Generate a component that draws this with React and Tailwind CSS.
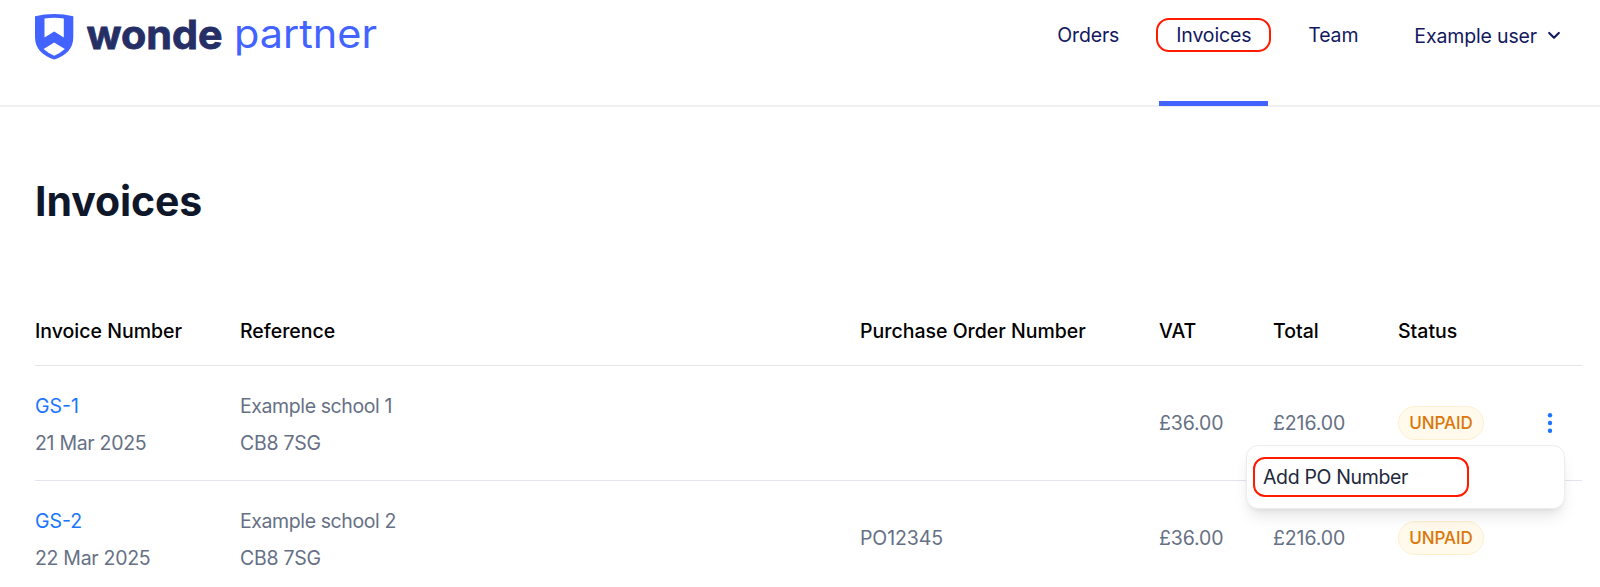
import { useState } from "react";

const invoices = [
  {
    id: "GS-1",
    date: "21 Mar 2025",
    school: "Example school 1",
    postcode: "CB8 7SG",
    po: "",
    vat: "£36.00",
    total: "£216.00",
    status: "UNPAID",
  },
  {
    id: "GS-2",
    date: "22 Mar 2025",
    school: "Example school 2",
    postcode: "CB8 7SG",
    po: "PO12345",
    vat: "£36.00",
    total: "£216.00",
    status: "UNPAID",
  },
];

function Logo() {
  return (
    <svg className="h-[72px] w-[360px]" viewBox="0 -12 360 72">
      {/* Shield */}
      <path
        fill="#4263ff"
        d="M0 4.2Q19 -0.2 38.3 4.2V25C38.3 37 31 43.5 19.2 47.6C7.5 43.5 0 37 0 25Z"
      />
      <path fill="#fff" d="M9.5 6.4Q19.2 5 28.8 6.4V25.4L19.2 19.6L9.5 25.4Z" />
      <path fill="#fff" d="M8.6 37L19.2 30.4L29.8 37Q25 41.4 19.2 43.8Q13.4 41.4 8.6 37Z" />
      <text
        x="51.5"
        y="36.5"
        textLength="136"
        lengthAdjust="spacingAndGlyphs"
        className="fill-[#252f66] stroke-[#252f66] font-['Inter',sans-serif] text-[40px] font-bold tracking-normal"
        strokeWidth="0.8"
      >
        wonde
      </text>
      <text
        x="199"
        y="36"
        textLength="143"
        lengthAdjust="spacingAndGlyphs"
        className="fill-[#4263ff] font-['Inter',sans-serif] text-[39px] font-normal tracking-normal"
      >
        partner
      </text>
    </svg>
  );
}

function Header() {
  return (
    <header className="flex h-[107px] items-stretch justify-between border-b-2 border-[#efeff0] pr-10 pl-[35px] tracking-[-0.15px] text-[#13185f]">
      <Logo />
      <nav className="flex">
        <a className="mt-5 mr-[37px] leading-[30px]">Orders</a>
        <div className="-mb-px flex w-[115px] flex-col items-center justify-between pt-[18px]">
          <a className="flex h-[34px] w-full items-center justify-center rounded-[13px] border-2 border-[#ff1a00] pt-0.5">
            Invoices
          </a>
          <span className="h-[5px] w-[109px] bg-[#4263ff]" />
        </div>
        <a className="mt-5 ml-[37px] leading-[30px]">Team</a>
        <button className="mt-[22px] ml-14 flex h-[30px] items-center gap-[11px]">
          Example user
          <svg className="-mt-1 h-3 w-3" viewBox="0 0 12 12" fill="none">
            <path
              d="M1.2 3.9L6 8.7L10.8 3.9"
              stroke="currentColor"
              strokeWidth="2.1"
              strokeLinecap="round"
              strokeLinejoin="round"
            />
          </svg>
        </button>
      </nav>
    </header>
  );
}

function ActionsMenu() {
  return (
    <div className="absolute top-[79px] right-[17px] z-10 h-16 w-[319px] rounded-xl border border-[#ececee] bg-white px-1.5 py-[11px] shadow-lg">
      <button className="flex h-10 w-[216px] items-center rounded-xl border-2 border-[#ff1a00] pt-0.5 pl-2 tracking-[-0.35px] text-[#1e293b]">
        Add PO Number
      </button>
    </div>
  );
}

function InvoiceRow({ invoice, open, onToggle }) {
  return (
    <div className="relative grid h-[115px] grid-cols-[205px_620px_299px_114px_125px_1fr] items-center border-b border-[#e4e5ee] text-[#667085]">
      <div className="pt-1 leading-[37px]">
        <a className="block tracking-normal text-[#1a75ff]">{invoice.id}</a>
        <p className="tracking-[-0.3px]">{invoice.date}</p>
      </div>
      <div className="pt-1 leading-[37px]">
        <p>{invoice.school}</p>
        <p className="tracking-[-0.25px]">{invoice.postcode}</p>
      </div>
      <span className="pt-0.5 tracking-[-0.1px]">{invoice.po}</span>
      <span className="pt-0.5 tracking-[-0.1px]">{invoice.vat}</span>
      <span className="pt-0.5 tracking-[-0.1px]">{invoice.total}</span>
      <div className="flex items-center justify-between pr-[26px]">
        <span className="flex h-[34px] w-[86px] items-center justify-center rounded-full border border-[#fdf0d0] bg-[#fffaeb] pt-px text-[17px] font-medium tracking-[-0.1px] text-[#dc7609]">
          {invoice.status}
        </span>
        {!invoice.po && (
          <button onClick={onToggle} className="text-[#1a75ff]">
            <svg className="h-6 w-3" viewBox="0 0 12 24" fill="currentColor">
              <circle cx="6" cy="4.2" r="2.2" />
              <circle cx="6" cy="12" r="2.2" />
              <circle cx="6" cy="19.8" r="2.2" />
            </svg>
          </button>
        )}
      </div>
      {open && <ActionsMenu />}
    </div>
  );
}

export default function App() {
  const [openId, setOpenId] = useState("GS-1");

  return (
    <div className="h-[587px] w-[1600px] overflow-hidden bg-white font-['Inter',sans-serif] text-[19.5px] tracking-[-0.4px]">
      <Header />
      <main className="pr-[18px] pl-[35px]">
        <h1 className="pt-[69px] text-[41px] leading-[50px] font-bold tracking-[-0.1px] text-[#0f172a]">
          Invoices
        </h1>
        <div className="mt-[73px] grid h-[67px] grid-cols-[205px_620px_299px_114px_125px_1fr] items-center border-b border-[#e5e5e7] font-medium tracking-normal text-black">
          <span>Invoice Number</span>
          <span>Reference</span>
          <span>Purchase Order Number</span>
          <span>VAT</span>
          <span>Total</span>
          <span>Status</span>
        </div>
        {invoices.map((invoice) => (
          <InvoiceRow
            key={invoice.id}
            invoice={invoice}
            open={openId === invoice.id}
            onToggle={() => setOpenId(openId === invoice.id ? null : invoice.id)}
          />
        ))}
      </main>
    </div>
  );
}
